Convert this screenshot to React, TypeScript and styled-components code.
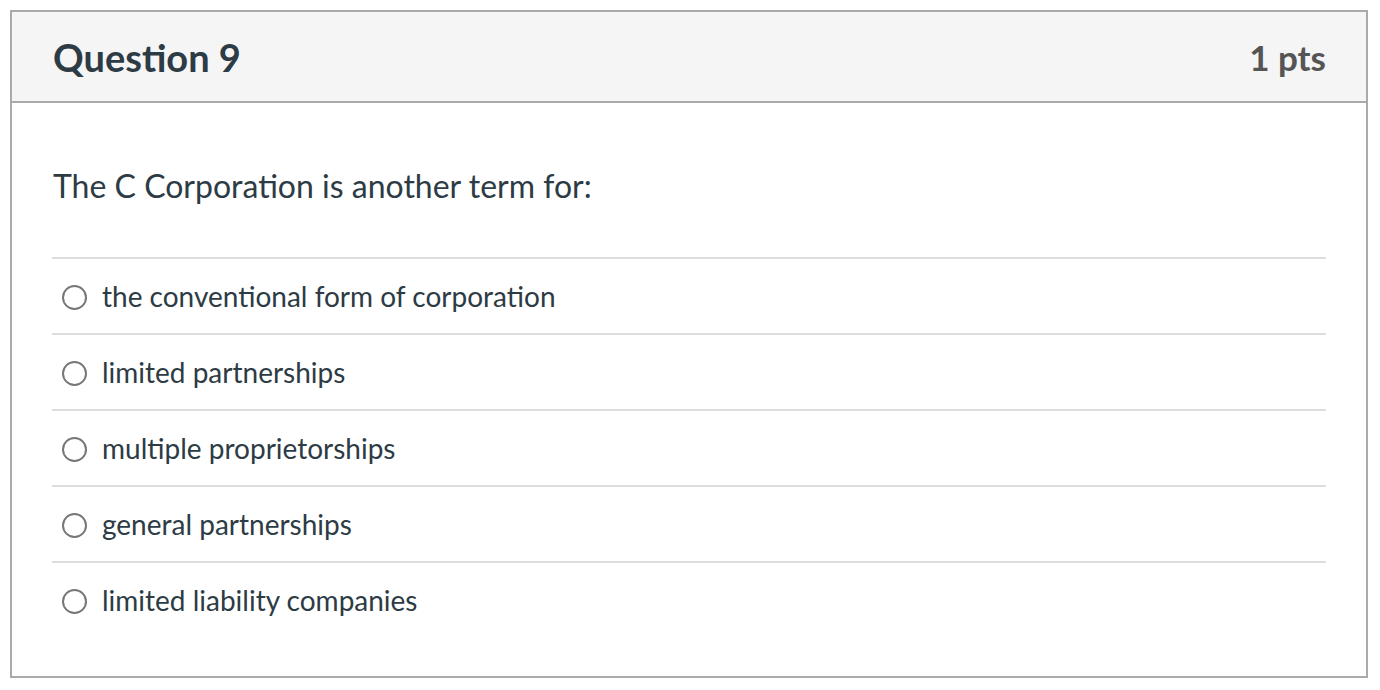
import React from 'react';
import styled, { createGlobalStyle } from 'styled-components';

const GlobalStyle = createGlobalStyle`
  html, body {
    margin: 0;
    background: #fff;
  }
  body {
    font-family: Lato, "Open Sans", "Liberation Sans", sans-serif;
    color: #2d3b45;
  }
`;

const Page = styled.div`
  padding: 10px 12px 10px 10px;
`;

const Card = styled.div`
  border: 2px solid #aaaaaa;
  background: #fff;
`;

const Header = styled.div`
  display: flex;
  align-items: center;
  justify-content: space-between;
  height: 89px;
  padding: 0 40px 0 41px;
  background: #f5f5f5;
  border-bottom: 2px solid #aaaaaa;
`;

const Title = styled.h2`
  margin: 0;
  font-size: 38px;
  font-weight: 700;
  color: #2d3b45;
`;

const Points = styled.div`
  font-size: 35px;
  font-weight: 700;
  color: #555555;
`;

const Body = styled.div`
  padding: 65px 40px 39px 40px;
`;

const Prompt = styled.p`
  margin: 0 0 53px 1px;
  font-size: 32px;
  line-height: 36px;
`;

const Answers = styled.div`
  display: flex;
  flex-direction: column;
`;

const Answer = styled.label`
  display: flex;
  align-items: center;
  gap: 15px;
  height: 74px;
  border-top: 2px solid #dddddd;
  padding-left: 10px;
  font-size: 28px;
  color: #2d3b45;
  cursor: pointer;
`;

const Radio = styled.span`
  width: 21px;
  height: 21px;
  border: 2px solid #777777;
  border-radius: 50%;
  flex: none;
  margin-top: 2px;
`;

const answers = [
  'the conventional form of corporation',
  'limited partnerships',
  'multiple proprietorships',
  'general partnerships',
  'limited liability companies',
];

export default function App() {
  return (
    <>
      <GlobalStyle />
      <Page>
        <Card>
          <Header>
            <Title>Question 9</Title>
            <Points>1 pts</Points>
          </Header>
          <Body>
            <Prompt>The C Corporation is another term for:</Prompt>
            <Answers>
              {answers.map((a) => (
                <Answer key={a}>
                  <Radio />
                  {a}
                </Answer>
              ))}
            </Answers>
          </Body>
        </Card>
      </Page>
    </>
  );
}
